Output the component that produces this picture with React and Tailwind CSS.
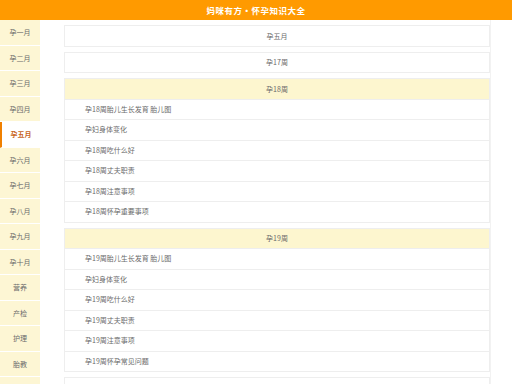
const months = ["孕一月", "孕二月", "孕三月", "孕四月", "孕五月", "孕六月", "孕七月", "孕八月", "孕九月", "孕十月", "营养", "产检", "护理", "胎教", ""];

const sections = [
  { title: "孕五月" },
  { title: "孕17周" },
  {
    title: "孕18周",
    open: true,
    items: ["孕18周胎儿生长发育 胎儿图", "孕妇身体变化", "孕18周吃什么好", "孕18周丈夫职责", "孕18周注意事项", "孕18周怀孕重要事项"],
  },
  {
    title: "孕19周",
    open: true,
    items: ["孕19周胎儿生长发育 胎儿图", "孕妇身体变化", "孕19周吃什么好", "孕19周丈夫职责", "孕19周注意事项", "孕19周怀孕常见问题"],
  },
  { title: "孕20周" },
];

const font = { fontFamily: '"Noto Sans CJK SC", "Noto Sans", sans-serif' };

export default function App() {
  const active = "孕五月";

  return (
    <div className="w-[512px] h-[384px] overflow-hidden bg-white" style={font}>
      <header className="h-[20px] bg-[#ff9a00] flex items-center justify-center">
        <h1 className="text-[8.5px] font-bold text-white tracking-[0.5px]">妈咪有方•怀孕知识大全</h1>
      </header>

      <div className="flex">
        {/* 左侧月份导航 */}
        <nav className="w-[40px] shrink-0">
          {months.map((m, i) => (
            <div
              key={i}
              className={
                m === active
                  ? "h-[25.5px] flex items-center justify-center bg-white border-l-2 border-[#f08000] text-[7px] font-bold text-[#c8651c] border-b border-b-white"
                  : "h-[25.5px] flex items-center justify-center bg-[#fdf6d4] border-b border-white text-[7px] text-[#6a6a6a]"
              }
            >
              {m}
            </div>
          ))}
        </nav>

        <main className="pl-[24px] pt-[5px] flex flex-col gap-[5px] w-[451px] border-r border-[#f2f2f2]">
          {sections.map((s) => (
            <div key={s.title} className="w-[426px] border border-[#eeeeee]">
              <div
                className={
                  s.open
                    ? "h-[19.5px] flex items-center justify-center bg-[#fdf6cf] text-[7px] text-[#6a6a6a]"
                    : "h-[19.5px] flex items-center justify-center bg-white text-[7px] text-[#6a6a6a]"
                }
              >
                {s.title}
              </div>
              {s.open &&
                s.items.map((it) => (
                  <div
                    key={it}
                    className="h-[20.5px] flex items-center pl-[20px] pb-[1px] border-t border-[#eeeeee] text-[7px] text-[#6a6a6a]"
                  >
                    {it}
                  </div>
                ))}
            </div>
          ))}
        </main>
      </div>
    </div>
  );
}
